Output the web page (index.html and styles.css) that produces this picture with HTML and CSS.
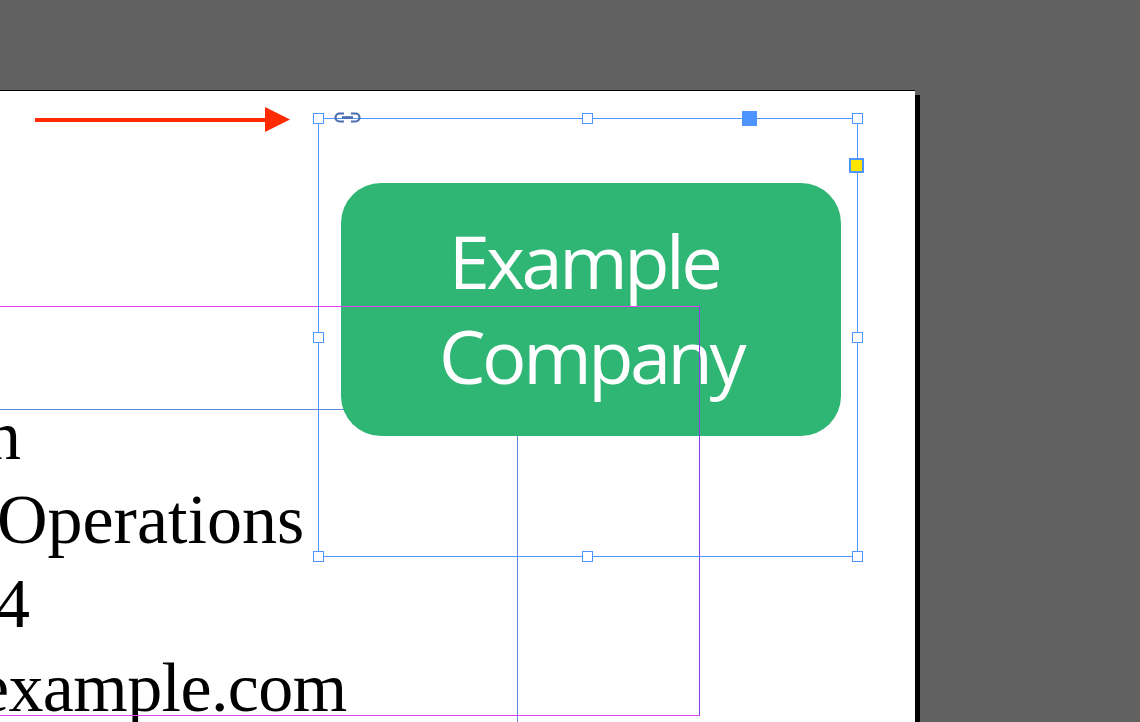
FILE: index.html
```html
<!DOCTYPE html>
<html lang="en">
<head>
	<meta charset="UTF-8">
	<title>layout</title>
	<link rel="stylesheet" href="styles.css">
</head>
<body>
	<section class="page">
		<svg class="arrow" width="255" height="25" viewBox="0 0 255 25">
			<rect x="0" y="11" width="232" height="4" fill="#ff2a00"/>
			<polygon points="230,0 255,12.5 230,25" fill="#ff2a00"/>
		</svg>

		<div class="text-frame">
			<div class="lines">
				<p class="l-name">n</p>
				<p class="l-title">Operations</p>
				<p class="l-phone">4</p>
				<p class="l-mail">example.com</p>
			</div>
		</div>

		<div class="logo">
			<span class="first">Example</span>
			<span>Company</span>
		</div>

		<div class="guide"></div>

		<div class="selection">
			<svg class="link" width="29" height="11" viewBox="0 0 29 11">
				<path d="M11 1.5H6.5a4 4 0 0 0 0 8H11M18 1.5h4.5a4 4 0 0 1 0 8H18" fill="none" stroke="#4a6db0" stroke-width="2.2"/>
				<rect x="9" y="4.2" width="11" height="2.6" fill="#4a6db0"/>
			</svg>
			<i class="h h-tl"></i>
			<i class="h h-tc"></i>
			<i class="h h-tr"></i>
			<i class="h h-ml"></i>
			<i class="h h-mr"></i>
			<i class="h h-bl"></i>
			<i class="h h-bc"></i>
			<i class="h h-br"></i>
			<i class="anchor"></i>
			<i class="corner"></i>
		</div>
	</section>
</body>
</html>
```

FILE: styles.css
```css
*{margin: 0; padding: 0; box-sizing: border-box;}
html, body{height: 100%; overflow: hidden;}
body{background: #616161; padding-top: 90px; font-family: "Liberation Serif", serif;}

.page{position: relative; width: 915px; height: 632px; background: #fff; border-top: 1px solid #000; box-shadow: 5px 5px 0 #000;}

.arrow{position: absolute; left: 35px; top: 16px; display: block;}

/* text frame, lies under the logo */
.text-frame{position: absolute; left: -20px; top: 318px; width: 538px; height: 400px; border-top: 1px solid #5b8ad6; border-right: 1px solid #5b8ad6;}
.lines{margin-top: -16px; padding-left: 20px; font-size: 70px; line-height: 84px; color: #000; white-space: nowrap;}
.l-name{margin-left: -14px;}
.l-title{margin-left: -3px;}
.l-phone{margin-left: -5px;}
.l-mail{margin-left: -22px; letter-spacing: -0.6px;}

.logo{position: absolute; left: 341px; top: 92px; width: 500px; height: 253px; border-radius: 40px; background: #2fb574; color: #fff; display: flex; flex-direction: column; justify-content: center; align-items: center; font-family: "Open Sans", sans-serif; font-size: 74px; line-height: 95px; letter-spacing: -3.5px;}
.logo .first{margin-right: 14px; margin-top: -3px;}

.guide{position: absolute; left: -1px; top: 215px; width: 701px; height: 410px; border-top: 1px solid #e440f4; border-bottom: 1px solid #e440f4; border-right: 1px solid #8b3ae8;}

.selection{position: absolute; left: 318px; top: 27px; width: 540px; height: 439px; border: 1px solid #4d94ff;}
.link{position: absolute; left: 14px; top: -7px; display: block;}
.h{position: absolute; width: 11px; height: 11px; background: #fff; border: 1px solid #4d94ff;}
.h-tl{left: -6px; top: -6px;}
.h-tc{left: calc(50% - 6px); top: -6px;}
.h-tr{right: -6px; top: -6px;}
.h-ml{left: -6px; top: calc(50% - 6px);}
.h-mr{right: -6px; top: calc(50% - 6px);}
.h-bl{left: -6px; bottom: -6px;}
.h-bc{left: calc(50% - 6px); bottom: -6px;}
.h-br{right: -6px; bottom: -6px;}
.anchor{position: absolute; left: 423px; top: -8px; width: 15px; height: 15px; background: #4d94ff;}
.corner{position: absolute; left: 530px; top: 39px; width: 15px; height: 15px; background: #ffe600; border: 2px solid #4d94ff;}
```
